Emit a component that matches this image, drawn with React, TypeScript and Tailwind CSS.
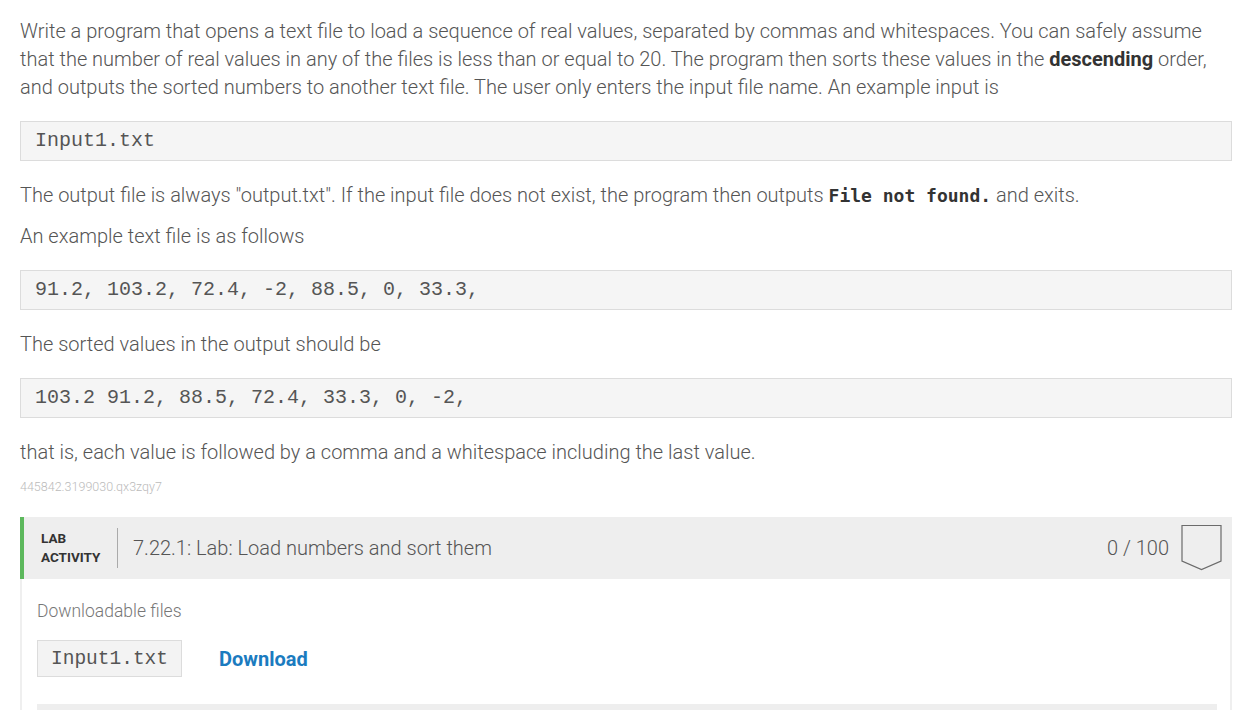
import React from "react";

const body = "font-['Roboto','Liberation_Sans',sans-serif]";
const mono = "font-['Liberation_Mono','Courier_New',monospace]";

function CodeBox({ children }: { children: React.ReactNode }) {
  return (
    <div className={`${mono} h-[40px] flex items-center px-[14px] bg-[#f5f5f5] border border-[#dcdcdc] text-[20px] text-[#555]`}>
      {children}
    </div>
  );
}

function Badge() {
  return (
    <svg width="41" height="48" viewBox="0 0 41 48" className="block">
      <path d="M1 1.5 H40 V37 L20.5 45.5 L1 37 Z" fill="none" stroke="#6b6b6b" strokeWidth="1.2" />
    </svg>
  );
}

export default function App() {
  return (
    <div className={`${body} bg-white w-[1250px] h-[710px] overflow-hidden pl-[20px] pr-[18px] pt-[17px] font-light text-[#555] text-[20px] leading-[28px]`}>
      <p>
        Write a program that opens a text file to load a sequence of real values, separated by commas and whitespaces. You can safely assume
        that the number of real values in any of the files is less than or equal to 20. The program then sorts these values in the{" "}
        <b className="font-bold text-[#333]">descending</b> order, and outputs the sorted numbers to another text file. The user only enters the input file name. An example input is
      </p>

      <div className="mt-[20px]">
        <CodeBox>Input1.txt</CodeBox>
      </div>

      <p className="mt-[20px]">
        The output file is always "output.txt". If the input file does not exist, the program then outputs{" "}
        <code className="font-['DejaVu_Sans_Mono',monospace] font-bold text-[18px] text-[#333]">File not found.</code> and exits.
      </p>
      <p className="mt-[12px]">An example text file is as follows</p>

      <div className="mt-[20px]">
        <CodeBox>91.2, 103.2, 72.4, -2, 88.5, 0, 33.3,</CodeBox>
      </div>

      <p className="mt-[20px]">The sorted values in the output should be</p>

      <div className="mt-[20px]">
        <CodeBox>103.2 91.2, 88.5, 72.4, 33.3, 0, -2,</CodeBox>
      </div>

      <p className="mt-[20px]">that is, each value is followed by a comma and a whitespace including the last value.</p>

      <div className="mt-[13px] text-[12.5px] leading-[16px] text-[#bbb]">445842.3199030.qx3zqy7</div>

      <div className="mt-[22px]">
        <div className="h-[62px] flex items-center bg-[#eeeeee] border-l-[4px] border-[#5cb85c] pl-[17px] pr-[10px]">
          <div className="font-['Roboto',sans-serif] font-bold text-[13.5px] leading-[19px] text-[#333] w-[76px]">
            LAB
            <br />
            ACTIVITY
          </div>
          <div className="w-px h-[40px] bg-[#aaa]" />
          <div className="ml-[15px] flex-1 text-[20px] text-[#555]">7.22.1: Lab: Load numbers and sort them</div>
          <div className="text-[20px] text-[#555] mr-[12px]">0 / 100</div>
          <Badge />
        </div>
        <div className="bg-white border-x-2 border-[#efefef] pl-[15px] pr-[13px] pt-[20px]">
          <div className="text-[17.5px] leading-[24px] text-[#777]">Downloadable files</div>
          <div className="mt-[17px] flex items-center">
            <div className={`${mono} h-[37px] flex items-center px-[13px] bg-[#f3f3f3] border border-[#dcdcdc] text-[19.5px] text-[#555]`}>
              Input1.txt
            </div>
            <a className="ml-[37px] font-bold text-[20px] text-[#1b7bbf]">Download</a>
          </div>
          <div className="mt-[27px] h-[20px] bg-[#eeeeee]" />
        </div>
      </div>
    </div>
  );
}
